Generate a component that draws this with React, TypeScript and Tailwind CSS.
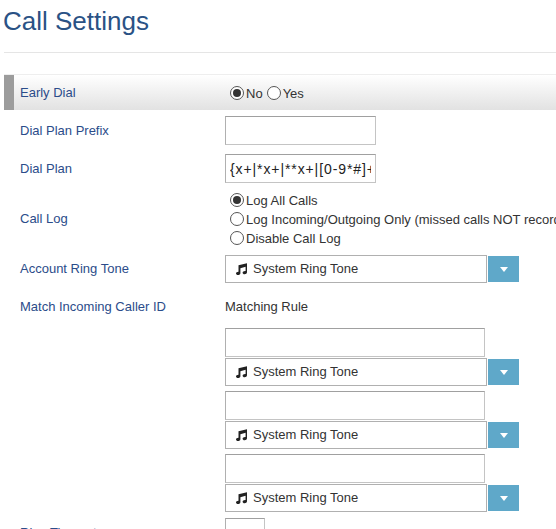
import type { ReactNode } from 'react'

function Radio({ checked }: { checked?: boolean }) {
  return (
    <span className="flex h-[14px] w-[14px] shrink-0 items-center justify-center rounded-full border border-[#555] bg-white">
      {checked && <span className="h-[8px] w-[8px] rounded-full bg-[#333]" />}
    </span>
  )
}

function Note() {
  return (
    <svg viewBox="0 0 12 12" className="h-[12px] w-[12px] shrink-0 fill-[#222]" aria-hidden>
      <path d="M3.5 2.2 12 .2v9c0 1.2-1.1 2-2.4 2-1.2 0-2-.6-2-1.5 0-1 1.1-1.8 2.4-1.8.2 0 .4 0 .6.1V3.8L5.4 5.2v5c0 1.1-1.1 1.8-2.4 1.8-1.2 0-2-.6-2-1.5 0-1 1.1-1.8 2.4-1.8h.1z" />
    </svg>
  )
}

function Row({ label, children, className }: { label?: string; children: ReactNode; className?: string }) {
  return (
    <div className={`flex items-center ${className ?? ''}`}>
      <div className="w-[221px] shrink-0 pl-[16px] text-[#2b4c8a]">{label}</div>
      <div className="min-w-0 flex-1">{children}</div>
    </div>
  )
}

function TextBox({ value, width = 'w-[151px]' }: { value?: string; width?: string }) {
  return (
    <input
      readOnly
      value={value ?? ''}
      className={`block h-[29px] ${width} border border-[#c4c4c4] border-t-[#a0a0a0] border-l-[#b0b0b0] bg-white px-[4px] text-[14px] tracking-[0.9px] text-[#222] outline-none`}
    />
  )
}

function RingSelect() {
  return (
    <div className="flex items-center gap-px">
      <div className="flex h-[28px] w-[262px] items-center gap-[6px] border border-[#b0b0b0] bg-white pl-[9px] text-[#333]">
        <Note />
        <span>System Ring Tone</span>
      </div>
      <div className="flex h-[26px] w-[31px] items-center justify-center bg-[#5fa8c9]">
        <span className="h-0 w-0 border-x-[4px] border-t-[5px] border-x-transparent border-t-white" />
      </div>
    </div>
  )
}

export default function App() {
  return (
    <div
      className="h-[529px] w-[556px] overflow-hidden bg-white pl-[4px] text-[13px] leading-[18px]"
      style={{ fontFamily: '"Liberation Sans", Arial, sans-serif' }}
    >
      <h1 className="-ml-px pt-[5px] text-[26px] leading-[32px] text-[#2a5285]">Call Settings</h1>
      <div className="mt-[15px] h-px bg-[#e5e5e5]" />

      <div className="mt-[21px] flex h-[36px] border-t border-[#eeeeee] bg-gradient-to-b from-white to-[#e2e2e2]">
        <div className="w-[10px] bg-[#9c9c9c]" />
        <div className="flex flex-1 items-center">
          <div className="w-[211px] pl-[6px] text-[#2b4c8a]">Early Dial</div>
          <div className="flex items-center gap-[2px] pl-[5px] text-[#333]">
            <Radio checked />
            <span className="mr-[2px] translate-y-px">No</span>
            <Radio />
            <span className="translate-y-px">Yes</span>
          </div>
        </div>
      </div>

      <Row label="Dial Plan Prefix" className="mt-[6px]">
        <TextBox />
      </Row>
      <Row label="Dial Plan" className="mt-[9px]">
        <TextBox value="{x+|*x+|**x+|[0-9*#]+}" />
      </Row>

      <Row label="Call Log" className="mt-[8px]">
        <div className="flex flex-col gap-px whitespace-nowrap text-[#333]">
          <div className="flex items-center gap-[2px] pl-[5px]"><Radio checked /><span className="translate-y-px">Log All Calls</span></div>
          <div className="flex items-center gap-[2px] pl-[5px]"><Radio /><span className="translate-y-px">Log Incoming/Outgoing Only (missed calls NOT recorded)</span></div>
          <div className="flex items-center gap-[2px] pl-[5px]"><Radio /><span className="translate-y-px">Disable Call Log</span></div>
        </div>
      </Row>

      <Row label="Account Ring Tone" className="mt-[8px]">
        <RingSelect />
      </Row>
      <Row label="Match Incoming Caller ID" className="mt-[15px] text-[#333]">
        Matching Rule
      </Row>

      <div className="mt-[12px] flex flex-col gap-[5px] pl-[221px]">
        {[0, 1, 2].map((i) => (
          <div key={i} className="flex flex-col gap-px">
            <TextBox width="w-[260px]" />
            <RingSelect />
          </div>
        ))}
      </div>

      <Row label="Ring Timeout" className="mt-[6px]">
        <TextBox width="w-[40px]" />
      </Row>
    </div>
  )
}
